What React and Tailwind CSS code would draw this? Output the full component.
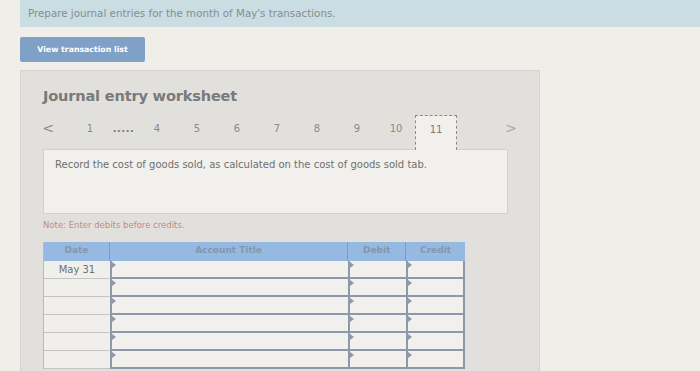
import React from 'react';

const font = { fontFamily: '"DejaVu Sans", Verdana, sans-serif' };

const NavCell = ({ children, w = 'w-[40px]' }) => (
  <div className={`${w} h-[34px] pb-[6px] flex items-center justify-center text-[10px] text-[#8a8a8a]`}>
    {children}
  </div>
);

const InputCell = ({ w }) => (
  <div className={`${w} relative h-full border-l-2 border-b-2 border-[#8f98ab] bg-[#f1f0ec]`}>
    <span className="absolute left-0 top-[1px] w-0 h-0 border-y-[3px] border-y-transparent border-l-[4px] border-l-[#8f98ab]" />
  </div>
);

const Row = ({ date }) => (
  <div className="flex h-[18px]">
    <div className="w-[66px] h-full border-b border-[#c4c4c2] flex items-center justify-center text-[10px] text-[#6f6f6f] bg-[#f0efeb]">
      {date}
    </div>
    <InputCell w="w-[239px]" />
    <InputCell w="w-[58px]" />
    <div className="w-[59px] relative h-full border-l-2 border-b-2 border-r-2 border-[#8f98ab] bg-[#f1f0ec]">
      <span className="absolute left-0 top-[1px] w-0 h-0 border-y-[3px] border-y-transparent border-l-[4px] border-l-[#8f98ab]" />
    </div>
  </div>
);

export default function App() {
  return (
    <div className="w-[700px] h-[371px] overflow-hidden bg-[#efeee9]" style={font}>
      <div className="pl-[20px]">
        <div className="h-[27px] bg-[#c9dde3] flex items-center pl-[8px] text-[10.3px] text-[#878d8f]">
          Prepare journal entries for the month of May's transactions.
        </div>

        <div className="mt-[10px] w-[125px] h-[25px] rounded-[2px] bg-[#7fa1c8] flex items-center justify-center text-[7.8px] font-bold text-white">
          View transaction list
        </div>

        <div className="mt-[8px] w-[520px] h-[310px] bg-[#e1e0dc] border border-[#d4d3cf] pl-[22px] pt-[14px]">
          <h2 className="text-[14.6px] font-bold text-[#7a7a7a] tracking-[-0.2px]">Journal entry worksheet</h2>

          <div className="mt-[8px] flex items-center">
            <NavCell w="w-[10px]"><span className="text-[14px] text-[#8a8a8a]">&lt;</span></NavCell>
            <div className="w-[17px]" />
            <NavCell>1</NavCell>
            <NavCell w="w-[27px]"><span className="font-bold tracking-[0.5px] text-[#7d7d7d]">.....</span></NavCell>
            <NavCell>4</NavCell>
            <NavCell>5</NavCell>
            <NavCell>6</NavCell>
            <NavCell>7</NavCell>
            <NavCell>8</NavCell>
            <NavCell>9</NavCell>
            <NavCell w="w-[38px]">10</NavCell>
            <div className="w-[42px] h-[35px] pb-[6px] -mb-[1px] relative z-10 bg-[#f1f0ec] border border-dashed border-b-0 border-[#8a8a8a] flex items-center justify-center text-[10px] text-[#7a7a7a]">
              11
            </div>
            <div className="w-[49px]" />
            <NavCell w="w-[10px]"><span className="text-[14px] text-[#a8a8a8]">&gt;</span></NavCell>
          </div>

          <div className="w-[465px] h-[65px] bg-[#f1f0ec] border border-[#d2d1cc] pl-[11px] pt-[7px] text-[10px] text-[#6f6f6f]">
            Record the cost of goods sold, as calculated on the cost of goods sold tab.
          </div>

          <p className="mt-[5px] text-[8.5px] text-[#c48a85]">Note: Enter debits before credits.</p>

          <div className="mt-[10px] w-[422px] border-l border-[#b9b9b7]">
            <div className="flex h-[19px] bg-[#95b9e1] text-[9px] font-bold text-[#8396ab]">
              <div className="w-[66px] flex items-center justify-center border-r border-[#7d9cc4]">Date</div>
              <div className="w-[239px] flex items-center justify-center border-r border-[#7d9cc4]">Account Title</div>
              <div className="w-[58px] flex items-center justify-center border-r border-[#7d9cc4]">Debit</div>
              <div className="w-[59px] flex items-center justify-center">Credit</div>
            </div>
            <Row date="May 31" />
            <Row />
            <Row />
            <Row />
            <Row />
            <Row />
          </div>
        </div>
      </div>
    </div>
  );
}
